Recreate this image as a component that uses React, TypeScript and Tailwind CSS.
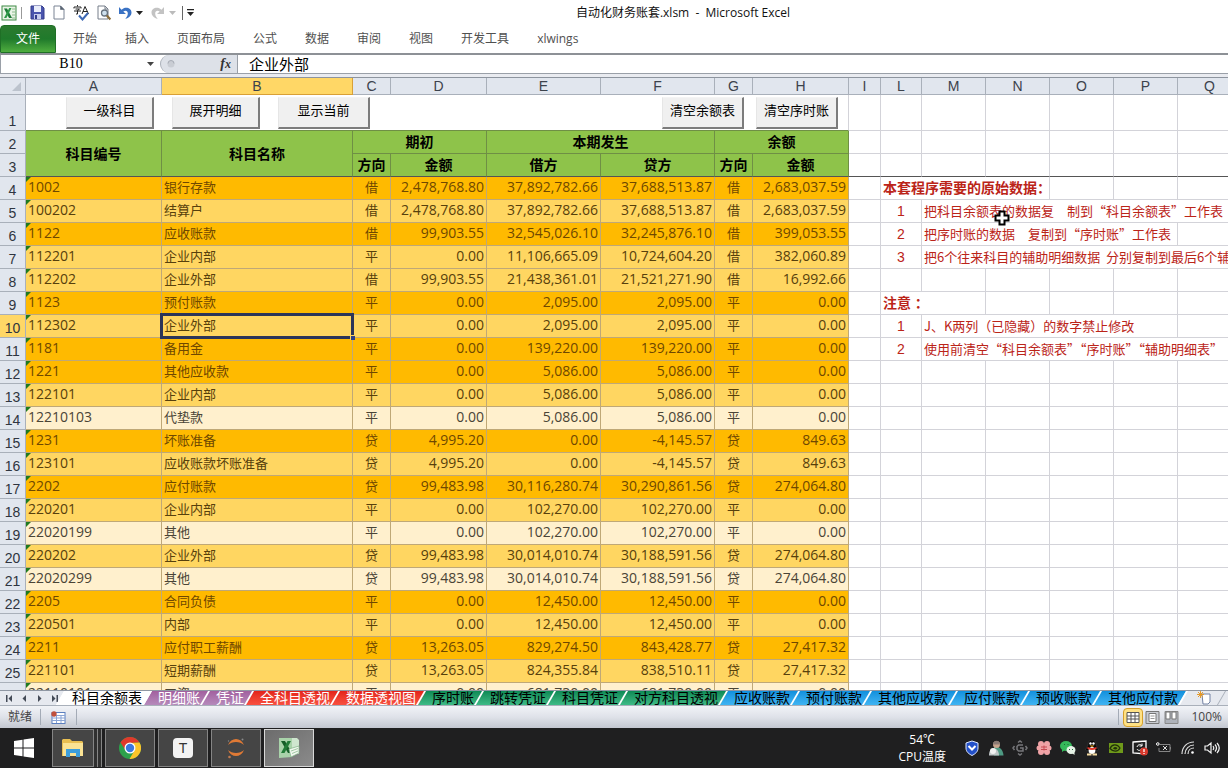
import React, { useState } from 'react';

type Level = 1 | 2 | 3;

interface Account {
  code: string;
  name: string;
  level: Level;
  openDir: string;
  open: string;
  debit: string;
  credit: string;
  closeDir: string;
  close: string;
}

const account = (
  level: Level,
  code: string,
  name: string,
  openDir: string,
  open: string,
  debit: string,
  credit: string,
  closeDir: string,
  close: string
): Account => ({ level, code, name, openDir, open, debit, credit, closeDir, close });

// First entry is sheet row 4
const ACCOUNTS: Account[] = [
  account(1, '1002', '银行存款', '借', '2,478,768.80', '37,892,782.66', '37,688,513.87', '借', '2,683,037.59'),
  account(2, '100202', '结算户', '借', '2,478,768.80', '37,892,782.66', '37,688,513.87', '借', '2,683,037.59'),
  account(1, '1122', '应收账款', '借', '99,903.55', '32,545,026.10', '32,245,876.10', '借', '399,053.55'),
  account(2, '112201', '企业内部', '平', '0.00', '11,106,665.09', '10,724,604.20', '借', '382,060.89'),
  account(2, '112202', '企业外部', '借', '99,903.55', '21,438,361.01', '21,521,271.90', '借', '16,992.66'),
  account(1, '1123', '预付账款', '平', '0.00', '2,095.00', '2,095.00', '平', '0.00'),
  account(2, '112302', '企业外部', '平', '0.00', '2,095.00', '2,095.00', '平', '0.00'),
  account(1, '1181', '备用金', '平', '0.00', '139,220.00', '139,220.00', '平', '0.00'),
  account(1, '1221', '其他应收款', '平', '0.00', '5,086.00', '5,086.00', '平', '0.00'),
  account(2, '122101', '企业内部', '平', '0.00', '5,086.00', '5,086.00', '平', '0.00'),
  account(3, '12210103', '代垫款', '平', '0.00', '5,086.00', '5,086.00', '平', '0.00'),
  account(1, '1231', '坏账准备', '贷', '4,995.20', '0.00', '-4,145.57', '贷', '849.63'),
  account(2, '123101', '应收账款坏账准备', '贷', '4,995.20', '0.00', '-4,145.57', '贷', '849.63'),
  account(1, '2202', '应付账款', '贷', '99,483.98', '30,116,280.74', '30,290,861.56', '贷', '274,064.80'),
  account(2, '220201', '企业内部', '平', '0.00', '102,270.00', '102,270.00', '平', '0.00'),
  account(3, '22020199', '其他', '平', '0.00', '102,270.00', '102,270.00', '平', '0.00'),
  account(2, '220202', '企业外部', '贷', '99,483.98', '30,014,010.74', '30,188,591.56', '贷', '274,064.80'),
  account(3, '22020299', '其他', '贷', '99,483.98', '30,014,010.74', '30,188,591.56', '贷', '274,064.80'),
  account(1, '2205', '合同负债', '平', '0.00', '12,450.00', '12,450.00', '平', '0.00'),
  account(2, '220501', '内部', '平', '0.00', '12,450.00', '12,450.00', '平', '0.00'),
  account(1, '2211', '应付职工薪酬', '贷', '13,263.05', '829,274.50', '843,428.77', '贷', '27,417.32'),
  account(2, '221101', '短期薪酬', '贷', '13,263.05', '824,355.84', '838,510.11', '贷', '27,417.32'),
  account(3, '22110101', '工资', '平', '0.00', '681,730.00', '681,730.00', '平', '0.00'),
];

const LEVEL_BG: Record<Level, string> = {
  1: 'bg-[#ffba00]',
  2: 'bg-[#ffd661]',
  3: 'bg-[#fff0cd]',
};

const LEVEL_TEXT: Record<Level, string> = {
  1: 'text-[#6f4800]',
  2: 'text-[#57400c]',
  3: 'text-[#4a4436]',
};

interface Note {
  no?: string;
  title?: string;
  text?: string;
  span: number;
}

const NOTES: Record<number, Note> = {
  4: { title: '本套程序需要的原始数据：', span: 3 },
  5: { no: '1', text: '把科目余额表的数据复\u2002\u2002制到“科目余额表”工作表', span: 5 },
  6: { no: '2', text: '把序时账的数据\u2002\u2002复制到“序时账”工作表', span: 4 },
  7: { no: '3', text: '把6个往来科目的辅助明细数据  分别复制到最后6个辅助明细表', span: 5 },
  9: { title: '注意 ：', span: 2 },
  10: { no: '1', text: 'J、K两列（已隐藏）的数字禁止修改', span: 4 },
  11: { no: '2', text: '使用前清空“科目余额表”“序时账”“辅助明细表”', span: 5 },
};

const COLUMNS = [
  { id: 'A', width: 'w-[136px]' },
  { id: 'B', width: 'w-[191px]' },
  { id: 'C', width: 'w-[38px]' },
  { id: 'D', width: 'w-[96px]' },
  { id: 'E', width: 'w-[114px]' },
  { id: 'F', width: 'w-[114px]' },
  { id: 'G', width: 'w-[38px]' },
  { id: 'H', width: 'w-[96px]' },
  { id: 'I', width: 'w-[32px]' },
  { id: 'L', width: 'w-[41px]' },
  { id: 'M', width: 'w-[64px]' },
  { id: 'N', width: 'w-[64px]' },
  { id: 'O', width: 'w-[64px]' },
  { id: 'P', width: 'w-[64px]' },
  { id: 'Q', width: 'w-[64px]' },
];

const SHEETS = [
  { name: '科目余额表', color: 'bg-white', text: 'text-black' },
  { name: '明细账', color: 'bg-linear-to-b from-[#a2609f] to-[#b58abb]', text: 'text-white' },
  { name: '凭证', color: 'bg-linear-to-b from-[#a2609f] to-[#b58abb]', text: 'text-white' },
  { name: '全科目透视', color: 'bg-linear-to-b from-[#e3221a] to-[#f8503f]', text: 'text-white' },
  { name: '数据透视图', color: 'bg-linear-to-b from-[#e3221a] to-[#f8503f]', text: 'text-white' },
  { name: '序时账', color: 'bg-linear-to-b from-[#0b8a55] to-[#3dba86]', text: 'text-black' },
  { name: '跳转凭证', color: 'bg-linear-to-b from-[#0b8a55] to-[#3dba86]', text: 'text-black' },
  { name: '科目凭证', color: 'bg-linear-to-b from-[#0b8a55] to-[#3dba86]', text: 'text-black' },
  { name: '对方科目透视', color: 'bg-linear-to-b from-[#0b8a55] to-[#3dba86]', text: 'text-black' },
  { name: '应收账款', color: 'bg-linear-to-b from-[#1090dd] to-[#3eb4f2]', text: 'text-black' },
  { name: '预付账款', color: 'bg-linear-to-b from-[#1090dd] to-[#3eb4f2]', text: 'text-black' },
  { name: '其他应收款', color: 'bg-linear-to-b from-[#1090dd] to-[#3eb4f2]', text: 'text-black' },
  { name: '应付账款', color: 'bg-linear-to-b from-[#1090dd] to-[#3eb4f2]', text: 'text-black' },
  { name: '预收账款', color: 'bg-linear-to-b from-[#1090dd] to-[#3eb4f2]', text: 'text-black' },
  { name: '其他应付款', color: 'bg-linear-to-b from-[#1090dd] to-[#3eb4f2]', text: 'text-black' },
];

const RIBBON = ['开始', '插入', '页面布局', '公式', '数据', '审阅', '视图', '开发工具', 'xlwings'];

const ExcelLogo = () => (
  <svg width="16" height="16" viewBox="0 0 16 16">
    <rect x="1" y="1" width="14" height="14" fill="#e9f4e6" stroke="#3f8a45" />
    <path d="M11 4h3M11 7h3M11 10h3M11 13h3" stroke="#8cbb8c" />
    <path d="M3 3.5h3l5 9.5H8z" fill="#1c7a35" />
    <path d="M10.5 3H8.2L3 13h2.4z" fill="#2f9a48" />
  </svg>
);

const SaveIcon = () => (
  <svg width="15" height="15" viewBox="0 0 15 15">
    <path d="M1 1h11l2 2v11H1z" fill="#4a55ad" stroke="#343d8c" />
    <rect x="4" y="1" width="7" height="6" fill="#e9edfa" />
    <rect x="4" y="9" width="7" height="5" fill="#c7cdec" />
    <rect x="5" y="10" width="2" height="4" fill="#343d8c" />
  </svg>
);

const NewIcon = () => (
  <svg width="12" height="15" viewBox="0 0 12 15">
    <path d="M1 1h6.5L11 4.5V14H1z" fill="#fff" stroke="#7a8494" />
    <path d="M7.5 1v3.5H11z" fill="#55606f" stroke="#55606f" strokeWidth=".6" />
  </svg>
);

const SpellingIcon = () => (
  <svg width="17" height="16" viewBox="0 0 17 16" fill="none">
    <path d="M4.500 0v1.500M1 3.500V2h7v1.500M2.500 4h4L4.500 5.500V9H3M1 6h7" stroke="#222" />
    <path d="M9 9l3-7.500L15.500 9M10 6.500h4.500" stroke="#222" />
    <path d="M6 10.500l3.500 4L15 8" stroke="#3d68b4" strokeWidth="2" />
  </svg>
);

const PreviewIcon = () => (
  <svg width="16" height="16" viewBox="0 0 16 16">
    <path d="M2 1h7l3 3v10H2z" fill="#fff" stroke="#777f8a" />
    <path d="M9 1v3h3" fill="none" stroke="#777f8a" />
    <circle cx="8.500" cy="8" r="3" fill="#cfe1ee" stroke="#66727e" strokeWidth="1.300" />
    <path d="M10.800 10.500l3.500 4" stroke="#8a6d3a" strokeWidth="2.200" />
  </svg>
);

const UndoIcon = ({ color }: { color: string }) => (
  <svg width="14" height="14" viewBox="0 0 14 14">
    <path d="M1 1v7h7L5.300 5.500C7.500 4 9.800 4.800 9.800 7.500c0 2-1 3.500-2.500 5.500C11 12 13.500 9.500 13.500 6.500 13.500 1.500 7 0 3.500 3.700z" fill={color} />
  </svg>
);

const Caret = ({ color = '#222' }: { color?: string }) => (
  <svg width="7" height="4" viewBox="0 0 7 4">
    <path d="M0 0h7L3.500 4z" fill={color} />
  </svg>
);

const TitleBar = () => (
  <header className="flex h-[25px] shrink-0 items-center bg-white pl-px">
    <div className="flex items-center">
      <ExcelLogo />
      <span className="mx-1 h-3 w-px bg-[#999]" />
      <button type="button" aria-label="保存" className="ml-1"><SaveIcon /></button>
      <button type="button" aria-label="新建" className="ml-2"><NewIcon /></button>
      <button type="button" aria-label="拼写检查" className="ml-2"><SpellingIcon /></button>
      <button type="button" aria-label="打印预览" className="ml-1.5"><PreviewIcon /></button>
      <button type="button" aria-label="撤消" className="ml-1.5"><UndoIcon color="#3a72c4" /></button>
      <button type="button" aria-label="撤消选项" className="ml-1"><Caret /></button>
      <button type="button" aria-label="恢复" className="ml-2 -scale-x-100"><UndoIcon color="#c3c3c3" /></button>
      <button type="button" aria-label="恢复选项" className="ml-1"><Caret color="#bbb" /></button>
      <span className="ml-1.5 h-3.5 w-px bg-[#666]" />
      <button type="button" aria-label="自定义快速访问工具栏" className="ml-1">
        <svg width="7" height="7" viewBox="0 0 7 7">
          <path d="M0 0h7v1.200H0zM0 3h7L3.500 7z" fill="#222" />
        </svg>
      </button>
    </div>
    <h1 className="flex-1 pr-14 text-center text-xs whitespace-pre text-[#111]">
      自动化财务账套.xlsm  -  Microsoft Excel
    </h1>
  </header>
);

const Ribbon = () => (
  <nav className="flex h-[30px] shrink-0 items-stretch border-b-2 border-[#8d9196] bg-white text-xs">
    <button
      type="button"
      className="mr-[3px] w-14 rounded-t-sm border border-[#1f6f26] bg-linear-to-b from-[#2b7a2f] via-[#1f7a2b] to-[#4fae3f] text-white"
    >
      文件
    </button>
    {RIBBON.map((tab) => (
      <button key={tab} type="button" className="px-3.5 text-[#505050]">
        {tab}
      </button>
    ))}
  </nav>
);

const FormulaBar: React.FC<{ cell: string; value: string }> = ({ cell, value }) => {
  const [formula, setFormula] = useState(value);

  return (
    <div className="flex h-[19px] shrink-0 items-stretch border-b border-[#9aa0a8] bg-white">
      <div className="flex w-40 items-center border-l border-[#9aa0a8]">
        <input
          aria-label="名称框"
          defaultValue={cell}
          className="w-[140px] bg-transparent text-center font-['Liberation_Serif','Noto_Sans_CJK_SC',serif] text-sm leading-4 outline-none"
        />
        <button type="button" aria-label="名称列表" className="ml-1.5"><Caret color="#444" /></button>
      </div>
      <div className="flex w-[77px] items-center justify-between rounded-l-full border-l border-[#aab0b9] bg-[#dde1e8] pr-1.5 pl-1.5">
        <svg width="8" height="8" viewBox="0 0 8 8">
          <circle cx="4" cy="4" r="3.500" fill="#c9cdd4" />
          <path d="M1 3.500a3 3 0 0 1 6 0" fill="none" stroke="#a7acb5" />
        </svg>
        <button
          type="button"
          aria-label="插入函数"
          className="font-['Liberation_Serif',serif] text-sm leading-4 font-bold text-[#333] italic"
        >
          f<span className="text-xs">x</span>
        </button>
      </div>
      <input
        aria-label="编辑栏"
        value={formula}
        onChange={(e) => setFormula(e.target.value)}
        className="min-w-0 flex-1 border-l border-[#9aa0a8] pl-[11px] text-[15px] leading-4 outline-none"
      />
    </div>
  );
};

const MacroButton: React.FC<{ label: string; className: string }> = ({ label, className }) => (
  <button
    type="button"
    className={`h-8 border-t border-r-2 border-b-2 border-l border-t-[#f4f4f4] border-r-[#7c7c7c] border-b-[#7c7c7c] border-l-[#e6e6e6] bg-[#f0f0f0] pb-0.5 text-[13px] whitespace-nowrap text-black ${className}`}
  >
    {label}
  </button>
);

const RowHeader: React.FC<{ row: number; selected?: boolean }> = ({ row, selected }) => (
  <th
    scope="row"
    className={`border-r border-b border-[#a9b0ba] pt-1 text-center align-bottom font-['Liberation_Sans',sans-serif] text-sm leading-[17px] font-normal text-[#2f3540] ${
      selected ? 'bg-[#ffd766]' : 'bg-[#e1e6ee]'
    }`}
  >
    {row}
  </th>
);

// Blank cells keep the sheet's grid lines going
const Blanks: React.FC<{ count: number; frozen?: boolean }> = ({ count, frozen }) => (
  <>
    {Array.from({ length: count }, (_, i) => (
      <td
        key={i}
        className={`border-r border-b border-r-[#d3d3d9] ${frozen ? 'border-b-[#555]' : 'border-b-[#d3d3d9]'}`}
      />
    ))}
  </>
);

const NoteCells: React.FC<{ note?: Note; row: number }> = ({ note, row }) => {
  if (!note) {
    return <Blanks count={7} />;
  }

  const cell = 'border-r border-b border-[#d3d3d9] text-[#bb2418] whitespace-pre align-top leading-[22px]';

  if (note.title) {
    return (
      <>
        <Blanks count={1} />
        <td colSpan={note.span} className={`${cell} pl-0.5 text-sm font-bold`}>
          {note.title}
        </td>
        <Blanks count={6 - note.span} />
      </>
    );
  }

  return (
    <>
      <Blanks count={1} />
      <td className={`${cell} text-center font-['Liberation_Sans',sans-serif] text-sm`}>{note.no}</td>
      <td colSpan={note.span} className={`${cell} relative pl-0.5 font-['Noto_Sans_CJK_SC',sans-serif] text-[13px]`}>
        {note.text}
        {row === 5 && (
          <svg className="absolute top-2.5 left-[72px]" width="16" height="16" viewBox="0 0 16 16">
            <path d="M5.500 1.500h5v4h4v5h-4v4h-5v-4h-4v-5h4z" fill="#fff" stroke="#000" strokeWidth="2" />
          </svg>
        )}
      </td>
      <Blanks count={5 - note.span} />
    </>
  );
};

const AccountRow: React.FC<{ item: Account; row: number; selected: boolean }> = ({ item, row, selected }) => {
  const cell = `border-r border-b border-[#bfa877] align-top text-sm leading-5 ${LEVEL_BG[item.level]} ${LEVEL_TEXT[item.level]}`;

  return (
    <tr className="h-[23px]">
      <RowHeader row={row} selected={selected} />
      <td className={`${cell} relative pl-0.5`}>
        <svg className="absolute top-0 left-0" width="5" height="5" viewBox="0 0 5 5">
          <path d="M0 0h5L0 5z" fill="#1f7a1f" />
        </svg>
        {item.code}
      </td>
      <td className={`${cell} relative pl-0.5`}>
        <span className="text-[13px]">{item.name}</span>
        {selected && (
          <span className="absolute -inset-x-0.5 -top-0.5 -bottom-0.5 z-10 border-[3px] border-[#2c3558]">
            <span className="absolute -right-1 -bottom-1 h-[5px] w-[5px] border-t border-l border-[#ffd661] bg-[#2f3f86]" />
          </span>
        )}
      </td>
      <td className={`${cell} text-center`}>
        <span className="text-[13px]">{item.openDir}</span>
      </td>
      <td className={`${cell} pr-0.5 text-right`}>{item.open}</td>
      <td className={`${cell} pr-0.5 text-right`}>{item.debit}</td>
      <td className={`${cell} pr-0.5 text-right`}>{item.credit}</td>
      <td className={`${cell} text-center`}>
        <span className="text-[13px]">{item.closeDir}</span>
      </td>
      <td className={`${cell} pr-0.5 text-right`}>{item.close}</td>
      <NoteCells note={NOTES[row]} row={row} />
    </tr>
  );
};

const Worksheet = () => {
  const head = 'border-r border-b border-[#6f8f45] bg-[#8ec34a] text-center text-sm leading-5 font-bold text-black';
  const selectedRow = 10;

  return (
    <main className="min-h-0 flex-1 overflow-hidden border-t border-[#8d949e] bg-white">
      {/* The columns set the table's width */}
      <table className="w-px table-fixed border-separate border-spacing-0">
        <colgroup>
          <col className="w-[26px]" />
          {COLUMNS.map((col) => (
            <col key={col.id} className={col.width} />
          ))}
        </colgroup>
        <thead>
          <tr className="h-[17px]">
            <td className="border-r border-b border-[#a9b0ba] bg-[#e1e6ee]">
              <svg className="mr-1 ml-auto" width="9" height="9" viewBox="0 0 9 9">
                <path d="M9 0v9H0z" fill="#bcc3cd" />
              </svg>
            </td>
            {COLUMNS.map((col) => (
              <th
                key={col.id}
                scope="col"
                className={`border-r border-b font-['Liberation_Sans',sans-serif] text-sm leading-4 font-normal text-[#3c424c] ${
                  col.id === 'B' ? 'border-[#d9a036] bg-[#ffd766]' : 'border-[#a9b0ba] bg-[#e1e6ee]'
                }`}
              >
                {col.id}
              </th>
            ))}
          </tr>
        </thead>
        <tbody>
          <tr className="h-9">
            <RowHeader row={1} />
            <td colSpan={8} className="border-r border-b border-r-[#d3d3d9] border-b-[#6f8f45]">
              <div className="flex gap-[18px] pr-2.5 pl-10">
                <MacroButton label="一级科目" className="w-[88px]" />
                <MacroButton label="展开明细" className="w-[88px]" />
                <MacroButton label="显示当前" className="w-[92px]" />
                <div className="ml-auto flex gap-3">
                  <MacroButton label="清空余额表" className="w-[82px]" />
                  <MacroButton label="清空序时账" className="w-[82px]" />
                </div>
              </div>
            </td>
            <Blanks count={7} />
          </tr>
          <tr className="h-[23px]">
            <RowHeader row={2} />
            <th rowSpan={2} className={`${head} border-b-[#555]`}>科目编号</th>
            <th rowSpan={2} className={`${head} border-b-[#555]`}>科目名称</th>
            <th colSpan={2} className={head}>期初</th>
            <th colSpan={2} className={head}>本期发生</th>
            <th colSpan={2} className={head}>余额</th>
            <Blanks count={7} />
          </tr>
          <tr className="h-[23px]">
            <RowHeader row={3} />
            {['方向', '金额', '借方', '贷方', '方向', '金额'].map((label, i) => (
              <th key={i} className={`${head} border-b-[#555]`}>
                {label}
              </th>
            ))}
            <Blanks count={7} frozen />
          </tr>
          {ACCOUNTS.map((item, i) => (
            <AccountRow key={item.code} item={item} row={i + 4} selected={i + 4 === selectedRow} />
          ))}
        </tbody>
      </table>
    </main>
  );
};

const NavArrow: React.FC<{ label: string; path: string }> = ({ label, path }) => (
  <button type="button" aria-label={label} className="flex h-full w-[15px] items-center justify-center">
    <svg width="7" height="7" viewBox="0 0 7 7">
      <path d={path} fill="#444b57" />
    </svg>
  </button>
);

const SheetTabs = () => {
  const [active, setActive] = useState('科目余额表');

  return (
    <div className="flex h-4 shrink-0 items-stretch overflow-hidden border-t border-b border-t-[#8f97a3] border-b-[#a9b0ba] bg-[#e6e9ef]">
      <div className="flex w-16 shrink-0 items-center pl-0.5">
        <NavArrow label="第一个工作表" path="M0 0h1.500v7H0zM6 0v7L2.500 3.500z" />
        <NavArrow label="上一个工作表" path="M5 0v7L1.500 3.500z" />
        <NavArrow label="下一个工作表" path="M2 0v7l3.500-3.500z" />
        <NavArrow label="最后一个工作表" path="M5.500 0H7v7H5.500zM1 0v7l3.500-3.500z" />
      </div>
      {SHEETS.map((sheet) => (
        <button
          key={sheet.name}
          type="button"
          onClick={() => setActive(sheet.name)}
          aria-pressed={active === sheet.name}
          className={`relative shrink-0 px-2 text-sm leading-[14px] whitespace-nowrap ${sheet.text}`}
        >
          <span className={`absolute inset-y-0 right-0 -left-1 -skew-x-[30deg] border-l-2 border-white ${sheet.color}`} />
          <span className="relative">{sheet.name}</span>
        </button>
      ))}
      <button type="button" aria-label="插入工作表" className="relative w-9 shrink-0">
        <span className="absolute inset-y-0 right-0 -left-1 -skew-x-[30deg] border-r border-l-2 border-r-[#a9b0ba] border-l-white bg-[#e6e9ef]" />
        <svg className="relative mx-auto" width="15" height="14" viewBox="0 0 15 14">
          <path d="M5 3h8v8l-2 2H6z" fill="#fff" stroke="#7282a3" />
          <path d="M3.500 0v7M0 3.500h7M1 1l5 5M6 1L1 6" stroke="#e39a2c" />
        </svg>
      </button>
    </div>
  );
};

const StatusBar = () => (
  <div className="flex h-[22px] shrink-0 items-center bg-linear-to-b from-[#f1f3f7] via-[#dfe2e9] to-[#c3c7d0] text-xs text-[#444]">
    <span className="pr-2 pl-2">就绪</span>
    <span className="h-4 w-px bg-[#a4abb6]" />
    <button type="button" aria-label="录制宏" className="mx-2.5">
      <svg width="15" height="13" viewBox="0 0 15 13">
        <rect x="1" y="1.500" width="13" height="11" fill="#fff" stroke="#5b7fbf" />
        <path d="M1 4.500h13M5.500 4v8M10 4v8M1 7h13M1 9.500h13" stroke="#8aa5d6" />
        <circle cx="3" cy="3" r="2.700" fill="#c0503c" />
      </svg>
    </button>
    <span className="h-4 w-px bg-[#a4abb6]" />
    <div className="ml-auto flex items-center">
      <span className="mr-1 h-4 w-px bg-[#a4abb6]" />
      <button type="button" aria-label="普通" className="rounded-sm border border-[#d5a02c] bg-[#ffe184] p-0.5">
        <svg width="14" height="13" viewBox="0 0 14 13">
          <path d="M1 1.500h12v10H1zM1 5h12M1 8h12M5 1.500v10M9 1.500v10" fill="#fff" stroke="#555" />
        </svg>
      </button>
      <button type="button" aria-label="页面布局视图" className="ml-0.5">
        <svg width="15" height="13" viewBox="0 0 15 13">
          <path d="M1 .5h13v12H1z" fill="#c9ccd2" stroke="#777" />
          <path d="M4 2.500h7v8H4z" fill="#fff" stroke="#777" />
          <path d="M5.500 5h4M5.500 7.500h4" stroke="#999" />
        </svg>
      </button>
      <button type="button" aria-label="分页预览" className="ml-1">
        <svg width="15" height="13" viewBox="0 0 15 13">
          <path d="M1 .5h13v12H1z" fill="#aeb2ba" stroke="#888" />
          <path d="M2 1h4v7H2zM8 1h4v7H8z" fill="#fff" stroke="#777" />
        </svg>
      </button>
      <button type="button" className="mr-1.5 ml-3">100%</button>
    </div>
  </div>
);

const TaskButton: React.FC<{ label: string; active?: boolean; children: React.ReactNode }> = ({ label, active, children }) => (
  <button
    type="button"
    aria-label={label}
    className={`flex h-[38px] w-[50px] items-center justify-center border ${
      active ? 'border-[#d8d8d8] bg-linear-to-br from-[#6c6c6c] to-[#8b8b8b]' : 'border-[#858585] bg-[#454545]'
    }`}
  >
    {children}
  </button>
);

const TRAY: { label: string; icon: React.ReactNode }[] = [
  {
    label: '安全卫士',
    icon: (
      <>
        <path d="M8 1l6 2v5c0 4-3 6-6 7.500C5 14 2 12 2 8V3z" fill="#2350c8" stroke="#dfe8ff" />
        <path d="M4.500 6L8 9.500 11.500 6" fill="none" stroke="#fff" strokeWidth="2" />
      </>
    ),
  },
  {
    label: '用户',
    icon: (
      <>
        <path d="M6 7c5-1 9 2 9.500 8.500H6z" fill="#4e9a83" />
        <path d="M1 15.500c0-5 2-7 5-7s5 3 5 7z" fill="#bfc5c6" />
        <circle cx="8.500" cy="4.500" r="3.500" fill="#c9a58e" />
        <path d="M5 4.500c0-5 7-5 7 0z" fill="#8a7a74" />
        <circle cx="5" cy="11" r="3" fill="#f1f1f1" />
      </>
    ),
  },
  {
    label: '罗技',
    icon: (
      <g fill="none" stroke="#77777a" strokeWidth="1.500">
        <path d="M11 5H6.500L5 6.500v3L6.500 11H11V8H8" />
        <path d="M6 2.500L8 1l2 1.500M6 13.500L8 15l2-1.500M2.500 6L1 8l1.500 2M13.500 6L15 8l-1.500 2" />
      </g>
    ),
  },
  {
    label: '输入法',
    icon: (
      <>
        <g fill="#f0a3a6">
          <circle cx="5" cy="4" r="3" />
          <circle cx="11" cy="4" r="3" />
          <circle cx="13" cy="8" r="2.500" />
          <circle cx="3" cy="8" r="2.500" />
          <circle cx="5" cy="12" r="3" />
          <circle cx="11" cy="12" r="3" />
          <circle cx="8" cy="8" r="4" />
        </g>
        <path d="M5 7h6M5 9.500h6M8 5.500v5" stroke="#c74a52" />
      </>
    ),
  },
  {
    label: '微信',
    icon: (
      <>
        <ellipse cx="6" cy="6" rx="6" ry="5" fill="#35b85a" />
        <path d="M2 9l0 3 3-2z" fill="#35b85a" />
        <ellipse cx="11" cy="10" rx="4.500" ry="4" fill="#e5f2e6" />
        <path d="M12 13l2.500 2V12z" fill="#e5f2e6" />
        <path d="M4 4.500h1M7.500 4.500h1M9 9.500h1M12 9.500h1" stroke="#1b6e34" />
      </>
    ),
  },
  {
    label: 'QQ',
    icon: (
      <>
        <path d="M8 0c3 0 4 2 4 5l2.500 5-1.500 1-1.500-1v3h-7v-3L3 11l-1.500-1L4 5c0-3 1-5 4-5z" fill="#050505" stroke="#4a4a4a" strokeWidth=".5" />
        <ellipse cx="8" cy="10.500" rx="3.300" ry="3.500" fill="#fff" />
        <circle cx="6.500" cy="3.500" r="1.200" fill="#fff" />
        <circle cx="9.500" cy="3.500" r="1.200" fill="#fff" />
        <path d="M5.500 5.500h5L8 7z" fill="#f5b21d" />
        <path d="M3.500 7q4.500 2 9 0v2q-4.500 2-9 0z" fill="#e33a2e" />
        <path d="M3 14.500h4.500M8.500 14.500H13" stroke="#f3d9a0" strokeWidth="2" />
      </>
    ),
  },
  {
    label: 'NVIDIA',
    icon: (
      <>
        <path d="M1 3h14v10H1z" fill="#6f9a1a" />
        <path d="M2 8.500c2-4.500 7-5 10-.5-2 4-7 4-10 .5z" fill="none" stroke="#22300a" strokeWidth="1.200" />
        <path d="M5 8.500c1-2 3-2 4.500-.5-1 2-3 2-4.500.5z" fill="#22300a" />
      </>
    ),
  },
  {
    label: '更新',
    icon: (
      <>
        <path d="M1 2l13-1v13L1 13z" fill="none" stroke="#fff" strokeWidth="1.300" />
        <path d="M5 7c1-3 4-3 5-1M10 3.500V6H7.500M10 8c-1 3-4 3-5 1" fill="none" stroke="#fff" />
        <circle cx="12" cy="11.500" r="4" fill="#d8382b" />
        <path d="M12 9v3M12 13v1" stroke="#fff" strokeWidth="1.300" />
      </>
    ),
  },
  {
    label: '电源',
    icon: (
      <g fill="none" stroke="#858585">
        <path d="M4 4.500h10v7H3V8M14.500 7v2.500" />
        <circle cx="1.800" cy="4" r="1.300" stroke="#fff" />
        <path d="M7 6l4 4M11 6l-4 4" stroke="#e0e0e0" />
      </g>
    ),
  },
  {
    label: '网络',
    icon: (
      <g fill="none" stroke="#ddd" strokeWidth="1.200">
        <path d="M2 14C2 7 7 2 14 2M5 14c0-5 4-9 9-9M8 14c0-3.500 2.500-6 6-6" />
        <circle cx="12.500" cy="12.500" r="1.300" fill="#fff" stroke="none" />
      </g>
    ),
  },
  {
    label: '音量',
    icon: (
      <g fill="none" stroke="#f2f2f2" strokeWidth="1.200">
        <path d="M1 6h2.500L7 3v10l-3.500-3H1zM9 6q1.500 2 0 4M11 4.500q3 3.500 0 7M13 3q4.500 5 0 10" />
      </g>
    ),
  },
];

const Taskbar = () => (
  <footer className="flex h-10 shrink-0 items-center bg-[#1f1f20] text-white">
    <button type="button" aria-label="开始" className="flex w-[52px] justify-center pr-1">
      <svg width="20" height="20" viewBox="0 0 20 20">
        <path d="M0 3l8.500-1.200V9.500H0zM9.500 1.600L20 0v9.500H9.500zM0 10.500h8.500v7.700L0 17zM9.500 10.500H20V20L9.500 18.400z" fill="#fff" />
      </svg>
    </button>
    <div className="flex items-center gap-[3px]">
      <div className="flex">
        <button
          type="button"
          aria-label="文件资源管理器"
          className="flex h-[38px] w-[42px] items-center justify-center border border-[#858585] bg-[#454545]"
        >
          <svg width="22" height="20" viewBox="0 0 22 20">
            <path d="M0 2l1-1h7l2 2h10l1 1v14H0z" fill="#e9bf52" />
            <path d="M1 5h20v13H1z" fill="#fbe394" />
            <path d="M4 19v-8h14v8h-4v-4H8v4z" fill="#3d9edb" />
          </svg>
        </button>
        <span className="h-[38px] w-1 border-r border-[#858585] bg-[#303030]" />
        <span className="h-[38px] w-1 border-r border-[#858585] bg-[#303030]" />
      </div>
      <TaskButton label="Chrome">
        <svg width="22" height="22" viewBox="0 0 22 22">
          <circle cx="11" cy="11" r="11" fill="#2da14c" />
          <path d="M1.500 5.500A11 11 0 0 1 20.500 5.500L11 6a5 5 0 0 0-4.700 7z" fill="#e0392c" />
          <path d="M20.500 5.500A11 11 0 0 1 10.500 22l5-8.500A5 5 0 0 0 11 6z" fill="#fbc42a" />
          <circle cx="11" cy="11" r="5.500" fill="#fff" />
          <circle cx="11" cy="11" r="4.200" fill="#3b78e0" />
        </svg>
      </TaskButton>
      <TaskButton label="Typora">
        <span className="flex h-5 w-5 items-center justify-center rounded-sm bg-[#f3f3f3] font-['Liberation_Sans',sans-serif] text-sm text-[#333]">
          T
        </span>
      </TaskButton>
      <TaskButton label="Jupyter">
        <svg width="20" height="22" viewBox="0 0 20 22">
          <path d="M2 8c3-8 13-8 16 0-4-4-12-4-16 0zM2 13c3 8 13 8 16 0-4 4-12 4-16 0z" fill="#e07a35" />
          <circle cx="16.500" cy="2.500" r="1" fill="#8a8a8a" />
          <circle cx="3.500" cy="20" r="1.300" fill="#c07a50" />
          <circle cx="2.500" cy="4" r=".7" fill="#8a8a8a" />
        </svg>
      </TaskButton>
      <TaskButton label="Excel" active>
        <svg width="22" height="22" viewBox="0 0 22 22">
          <path d="M1 1h18l2 2v14H1z" fill="#cfe6cf" />
          <path d="M1 1h13v19L1 21z" fill="#a9d3aa" />
          <path d="M3 4h4l7 12h-4z" fill="#155e27" />
          <path d="M13 4H9.500L3 16h3.500z" fill="#237c38" />
          <path d="M11 12l10-3v7l-8 4z" fill="#f1f8ef" stroke="#7fb386" strokeWidth=".7" />
          <path d="M13 14l7-2.500M14 16.500l6-2.500" stroke="#8cba8f" strokeWidth=".8" />
        </svg>
      </TaskButton>
    </div>
    <div className="ml-auto flex items-center">
      <div className="mr-[18px] text-center text-xs leading-[17px]">
        <div>54℃</div>
        <div>CPU温度</div>
      </div>
      <div className="flex gap-2 pr-2">
        {TRAY.map((item) => (
          <button key={item.label} type="button" aria-label={item.label}>
            <svg width="16" height="16" viewBox="0 0 16 16">
              {item.icon}
            </svg>
          </button>
        ))}
      </div>
    </div>
  </footer>
);

const App: React.FC = () => {
  return (
    <div
      lang="zh-CN"
      className="flex h-screen flex-col overflow-hidden bg-[#e9ebf0] font-['Open_Sans','Noto_Sans_CJK_SC',sans-serif]"
    >
      <TitleBar />
      <Ribbon />
      <FormulaBar cell="B10" value="企业外部" />
      <div className="h-[3px] shrink-0" />
      <Worksheet />
      <SheetTabs />
      <StatusBar />
      <Taskbar />
    </div>
  );
};

export default App;
